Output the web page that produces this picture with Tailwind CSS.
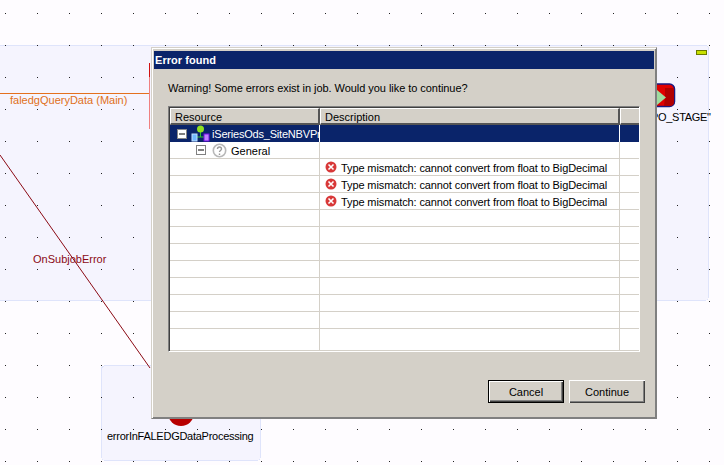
<!DOCTYPE html>
<html><head><meta charset="utf-8"><script src="https://cdn.jsdelivr.net/npm/@tailwindcss/browser@4"></script></head>
<body class="m-0">
<div class="relative w-[724px] h-[465px] overflow-hidden bg-[#fefcff] font-['Liberation_Sans',sans-serif] text-[11px] text-black">
  <svg class="absolute inset-0" width="724" height="465" shape-rendering="crispEdges">
    <defs><pattern id="d" x="5" y="13" width="32" height="32" patternUnits="userSpaceOnUse"><rect width="1" height="1" fill="#222"/></pattern></defs>
    <rect x="-5" y="45" width="713.5" height="255.5" rx="4" fill="#f5f4fe" stroke="#dfe4fb"/>
    <rect x="101.5" y="365.5" width="159" height="95" rx="4" fill="#f5f4fe" stroke="#dfe4fb"/>
    <rect width="724" height="465" fill="url(#d)"/>
    <rect x="696" y="50" width="10" height="4" fill="#c8e000" stroke="#6b7a00"/>
    <rect x="0" y="93" width="150" height="1" fill="#e4701e"/>
    <rect x="149" y="63" width="1" height="14" fill="#d01010"/>
    <rect x="149" y="77" width="1" height="52" fill="#f08080"/>
  </svg>
  <svg class="absolute inset-0" width="724" height="465">
    <line x1="0" y1="155" x2="150" y2="368" stroke="#8b0a14" stroke-width="1"/>
    <rect x="651" y="84" width="23.500" height="22.500" rx="5" fill="#e00000" stroke="#1a1a80" stroke-width="1.500"/>
    <path d="M665 88h9v14q0 4-4 4h-6l1-9z" fill="#b00000"/>
    <path d="M657 90l9 7.500-9 7.500z" fill="#9fdc9f"/>
    <circle cx="181" cy="413" r="13" fill="#b80000"/>
  </svg>
  <span class="absolute left-[10px] top-[92px] text-[#e0701a] whitespace-nowrap">faledgQueryData (Main)</span>
  <span class="absolute left-[33px] top-[251px] text-[#8b0a14] whitespace-nowrap">OnSubjobError</span>
  <span class="absolute left-[651px] top-[109px] whitespace-nowrap tracking-[-0.3px]">PO_STAGE"</span>
  <span class="absolute left-[107px] top-[428px] whitespace-nowrap tracking-[-0.26px]">errorInFALEDGDataProcessing</span>

  <div class="absolute left-[151px] top-[47px] w-[506px] h-[372px] bg-[#d4d0c8] border border-[#808080] border-t-[#d4d0c8] border-l-[#d4d0c8] shadow-[inset_1px_1px_0_#fff,inset_-1px_-1px_0_#808080] pt-[3px] px-[2px] flex flex-col">
    <div class="h-[18px] bg-[#0a246a] text-white font-bold text-[11px] leading-[18px] pl-[1px] shrink-0 tracking-[0.05px]">Error found</div>
    <div class="pl-[14px] pt-[12px] h-[37px] leading-[15px] shrink-0 tracking-[-0.05px]">Warning! Some errors exist in job. Would you like to continue?</div>
    <div class="ml-[14px] w-[472px] h-[246px] bg-white border border-[#808080] border-r-white border-b-white shadow-[inset_1px_1px_0_#404040] flex flex-col overflow-hidden shrink-0 pt-[1px] pl-[1px]">
      <div class="flex h-[17px] shrink-0 leading-[17px] bg-[#d4d0c8]">
        <div class="w-[150px] border-t border-l border-white border-b-2 border-r-2 border-b-[#555] border-r-[#555] pl-[4px]">Resource</div>
        <div class="w-[300px] border-t border-l border-white border-b-2 border-r-2 border-b-[#555] border-r-[#555] pl-[4px]">Description</div>
        <div class="flex-1 border-t border-l border-white border-b-2 border-b-[#555]"></div>
      </div>
      <div class="flex h-[17px] shrink-0 bg-[#0a246a] text-white leading-[16px]">
        <div class="w-[150px] border-r border-white flex items-center overflow-hidden whitespace-nowrap">
          <svg width="10" height="10" class="ml-[7px] shrink-0"><rect x=".5" y=".5" width="9" height="9" fill="#fff" stroke="#888"/><path d="M2 5h6" stroke="#000"/></svg>
          <svg width="19" height="17" class="ml-[4px] shrink-0"><path d="M5 12h9M9.500 5v7" stroke="#30c030"/><circle cx="9.500" cy="4" r="3.500" fill="#90e020"/><rect x="1" y="9" width="5" height="7" fill="#70b8ff" stroke="#c0e0ff"/><rect x="13" y="9" width="5" height="7" fill="#c080ff" stroke="#7010e0"/></svg>
          <span class="ml-[2px] tracking-[-0.2px]">iSeriesOds_SiteNBVProcess</span>
        </div>
        <div class="w-[300px] border-r border-white"></div><div class="flex-1"></div>
      </div>
      <div class="flex h-[17px] shrink-0 border-b border-[#d4d0c8] leading-[16px]">
        <div class="w-[150px] border-r border-[#d4d0c8] flex items-center">
          <svg width="10" height="10" class="ml-[26px] shrink-0"><rect x=".5" y=".5" width="9" height="9" fill="#fff" stroke="#808080"/><path d="M2 5h6" stroke="#000"/></svg>
          <svg width="15" height="15" class="ml-[6px] shrink-0"><circle cx="7.500" cy="7.500" r="6.200" fill="#fff" stroke="#b8b8b8" stroke-width="1.600"/><path d="M5.500 6c0-2.600 4-2.600 4 0 0 1.500-2 1.500-2 3M7.500 10.500v1.500" fill="none" stroke="#999" stroke-width="1.400"/></svg>
          <span class="ml-[4px] mt-[2px]">General</span>
        </div>
        <div class="w-[300px] border-r border-[#d4d0c8]"></div><div class="flex-1"></div>
      </div>
      <div class="flex h-[17px] shrink-0 border-b border-[#d4d0c8] leading-[16px]"><div class="w-[150px] border-r border-[#d4d0c8]"></div><div class="w-[300px] border-r border-[#d4d0c8] flex items-center"><svg width="12" height="12" class="ml-[5px] shrink-0 mb-[1px]"><circle cx="6" cy="6" r="5.500" fill="#d83838"/><path d="M3.500 3.500l5 5M8.500 3.500l-5 5" stroke="#fff" stroke-width="1.600"/></svg><span class="ml-[4px] mt-[2px] whitespace-nowrap tracking-[-0.11px]">Type mismatch: cannot convert from float to BigDecimal</span></div><div class="flex-1"></div></div>
      <div class="flex h-[17px] shrink-0 border-b border-[#d4d0c8] leading-[16px]"><div class="w-[150px] border-r border-[#d4d0c8]"></div><div class="w-[300px] border-r border-[#d4d0c8] flex items-center"><svg width="12" height="12" class="ml-[5px] shrink-0 mb-[1px]"><circle cx="6" cy="6" r="5.500" fill="#d83838"/><path d="M3.500 3.500l5 5M8.500 3.500l-5 5" stroke="#fff" stroke-width="1.600"/></svg><span class="ml-[4px] mt-[2px] whitespace-nowrap tracking-[-0.11px]">Type mismatch: cannot convert from float to BigDecimal</span></div><div class="flex-1"></div></div>
      <div class="flex h-[17px] shrink-0 border-b border-[#d4d0c8] leading-[16px]"><div class="w-[150px] border-r border-[#d4d0c8]"></div><div class="w-[300px] border-r border-[#d4d0c8] flex items-center"><svg width="12" height="12" class="ml-[5px] shrink-0 mb-[1px]"><circle cx="6" cy="6" r="5.500" fill="#d83838"/><path d="M3.500 3.500l5 5M8.500 3.500l-5 5" stroke="#fff" stroke-width="1.600"/></svg><span class="ml-[4px] mt-[2px] whitespace-nowrap tracking-[-0.11px]">Type mismatch: cannot convert from float to BigDecimal</span></div><div class="flex-1"></div></div>
      <div class="flex h-[17px] shrink-0 border-b border-[#d4d0c8]"><div class="w-[150px] border-r border-[#d4d0c8]"></div><div class="w-[300px] border-r border-[#d4d0c8]"></div></div>
      <div class="flex h-[17px] shrink-0 border-b border-[#d4d0c8]"><div class="w-[150px] border-r border-[#d4d0c8]"></div><div class="w-[300px] border-r border-[#d4d0c8]"></div></div>
      <div class="flex h-[17px] shrink-0 border-b border-[#d4d0c8]"><div class="w-[150px] border-r border-[#d4d0c8]"></div><div class="w-[300px] border-r border-[#d4d0c8]"></div></div>
      <div class="flex h-[17px] shrink-0 border-b border-[#d4d0c8]"><div class="w-[150px] border-r border-[#d4d0c8]"></div><div class="w-[300px] border-r border-[#d4d0c8]"></div></div>
      <div class="flex h-[17px] shrink-0 border-b border-[#d4d0c8]"><div class="w-[150px] border-r border-[#d4d0c8]"></div><div class="w-[300px] border-r border-[#d4d0c8]"></div></div>
      <div class="flex h-[17px] shrink-0 border-b border-[#d4d0c8]"><div class="w-[150px] border-r border-[#d4d0c8]"></div><div class="w-[300px] border-r border-[#d4d0c8]"></div></div>
      <div class="flex h-[17px] shrink-0 border-b border-[#d4d0c8]"><div class="w-[150px] border-r border-[#d4d0c8]"></div><div class="w-[300px] border-r border-[#d4d0c8]"></div></div>
      <div class="flex flex-1 border-b border-[#d4d0c8]"><div class="w-[150px] border-r border-[#d4d0c8]"></div><div class="w-[300px] border-r border-[#d4d0c8]"></div></div>
    </div>
    <div class="flex justify-end gap-[5px] pr-[9px] mt-[28px]">
      <button class="w-[76px] h-[23px] border border-black bg-[#d4d0c8] shadow-[inset_1px_1px_0_#fff,inset_-1px_-1px_0_#404040,inset_-2px_-2px_0_#808080] leading-[20px]">Cancel</button>
      <button class="w-[76px] h-[23px] bg-[#d4d0c8] shadow-[inset_1px_1px_0_#fff,inset_-1px_-1px_0_#404040,inset_-2px_-2px_0_#808080] leading-[20px]">Continue</button>
    </div>
  </div>
</div>
</body></html>
